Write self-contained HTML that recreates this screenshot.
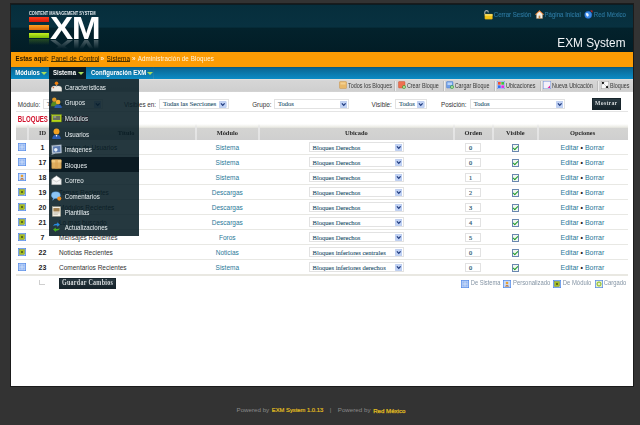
<!DOCTYPE html>
<html><head><meta charset="utf-8">
<style>
*{margin:0;padding:0;box-sizing:border-box}
html,body{width:640px;height:425px;overflow:hidden;background:#333;font-family:"Liberation Sans",sans-serif}
.a{position:absolute;white-space:nowrap}
#wrap{position:absolute;left:11px;top:4px;width:622px;height:382px;background:#fff;box-shadow:0 0 0 1px #1b1b1b}
.lnk{color:#2a7399;-webkit-text-stroke:0.15px #2a7399;font-size:6.1px;transform:scaleY(1.2);transform-origin:left center}
.crumb{font-size:6.4px;color:#241800;letter-spacing:0.05px;transform:scaleY(1.14);transform-origin:left center}
.mi{font-size:6px;font-weight:bold;color:#fff;transform:scaleY(1.22);transform-origin:left center}
.tri{position:absolute;width:0;height:0;border-left:3px solid transparent;border-right:3px solid transparent;border-top:3px solid #a6dc5c}
.tb{font-size:5.42px;color:#3a3a3a;transform:scaleY(1.18);transform-origin:left center}
.sep{position:absolute;width:1px;height:10px;background:#bdbdbd;box-shadow:1px 0 0 #ececec}
.ico{position:absolute;width:7.5px;height:8px;border-radius:1px}
.lbl{font-size:6.3px;color:#333}
.sel{position:absolute;height:10px;border:1px solid #e2e2e2;background:#fff;font-family:"Liberation Serif",serif;font-size:6.55px;color:#2a5670;-webkit-text-stroke:0.1px #2a5670;padding-left:3px;line-height:8px}
.sel svg{position:absolute;right:1px;top:1px}
.th{position:absolute;height:12.5px;background:linear-gradient(#dcdcd8,#d0d0d0 2px,#cdcdcd);font-family:"Liberation Serif",serif;font-weight:bold;font-size:6.4px;color:#2a2a2a;text-align:center;line-height:12.5px}
.c{position:absolute;font-size:6.5px;white-space:nowrap;line-height:15px}
.mod{color:#2a7898;text-align:center}
.id{font-weight:bold;color:#222;text-align:center;font-size:7px}
.tit{color:#333}
.ord{position:absolute;width:15.7px;height:9.6px;border:1px solid #e2e2e2;font-family:"Liberation Serif",serif;font-size:6.2px;color:#2a5670;-webkit-text-stroke:0.18px #2a5670;padding-left:3px;line-height:8px}
.chk{position:absolute;width:7.5px;height:7.5px;border:1px solid #6a88b0;background:#f0f6f0}
.chk:after{content:"";position:absolute;left:1.8px;top:0px;width:2px;height:4px;border-right:1.2px solid #1d9a2a;border-bottom:1.2px solid #1d9a2a;transform:rotate(45deg)}
.opt{color:#2a7898;font-size:6.95px}
.opt b{color:#222;font-weight:bold}
.ric{position:absolute;width:7.3px;height:7.3px;border:1px solid #7aa0e0;background:#dde8fb}
.ric.m:after{content:"";position:absolute;left:1.3px;top:1.3px;width:3px;height:3px;background:#a6b020;border:0.5px solid #556}
.ric.s:after{content:"";position:absolute;left:1px;top:1px;width:3.5px;height:3.5px;border:1px dotted #5a86c8}
.ric.p:after{content:"";position:absolute;left:1.5px;top:1.5px;width:3px;height:3px;background:#e8a040}
#dd{position:absolute;background:rgba(6,27,35,0.875)}
.di{position:absolute;left:0;width:90.2px;height:15.6px;color:#e8eef0}
.di span{position:absolute;left:15.5px;top:0;font-size:6.2px;line-height:16.5px;transform:scaleY(1.3);transform-origin:left 8.25px;white-space:nowrap}
.di i{position:absolute;left:3px;top:3.5px;width:9px;height:9px;border-radius:2px}
.btn{position:absolute;background:linear-gradient(#2a3a42,#15232a);border:1px solid #18252c;color:#d8dcde;font-family:"Liberation Serif",serif;text-align:center}
</style></head><body>
<div id="wrap">
<div class="a" style="left:0px;top:0px;width:622px;height:48px;background:linear-gradient(#0d1c22 0,#0d1c22 0.7px,#062e3c 0.8px,#083140 23px,#052a36 23.6px,#03222c 24.2px,#021d26 48px)"></div>
<div class="a a" style="left:17.7px;top:7.2px;font-size:4.6px;font-weight:bold;color:#dfe6ea;transform:scaleX(0.865);transform-origin:left">CONTENT MANAGEMENT SYSTEM</div>
<div class="a" style="left:18.2px;top:12.6px;width:19.7px;height:5.5px;background:linear-gradient(#ff3a1a,#d81a08)"></div>
<div class="a" style="left:18.2px;top:20.6px;width:19.7px;height:5.5px;background:linear-gradient(#ffa020,#e06a08)"></div>
<div class="a" style="left:18.2px;top:28.6px;width:19.7px;height:5.5px;background:linear-gradient(#c8f020,#78b808)"></div>
<div class="a" style="left:18.2px;top:35px;width:19.7px;height:6px;background:linear-gradient(rgba(120,180,20,0.3),rgba(120,180,20,0))"></div>
<div class="a" style="left:39.4px;top:8.7px;font-size:31px;font-weight:bold;color:#fff;letter-spacing:-1.2px;line-height:31px;transform:scaleX(1.12) ;transform-origin:left top;">XM</div>
<div class="a" style="left:39.4px;top:8.7px;font-size:31px;font-weight:bold;color:#fff;letter-spacing:-1.2px;line-height:31px;transform:scaleX(1.12) scaleY(-0.55);transform-origin:left 26.5px;opacity:0.3;-webkit-mask-image:linear-gradient(to top,rgba(0,0,0,1) 15%,rgba(0,0,0,0) 70%)">XM</div>
<div class="a" style="left:472.3px;top:6.2px;width:9.5px;height:9.5px;"><svg width="9.5" height="9.5" viewBox="0 0 16 16" style="position:absolute;left:0;top:0;"><path d="M3 7 V4 Q3 1 6 1 Q9 1 9 4" fill="none" stroke="#b0b0b0" stroke-width="1.8"/><rect x="3" y="7" width="13" height="8.5" rx="1" fill="#f2c418" stroke="#b88a10" stroke-width="0.6"/><rect x="3" y="7" width="13" height="2.5" fill="#fae070"/></svg></div>
<div class="a lnk" style="left:482.8px;top:6.7px;">Cerrar Sesión</div>
<div class="a" style="left:523.5px;top:6px;width:9px;height:9px;"><svg width="9" height="9" viewBox="0 0 16 16" style="position:absolute;left:0;top:0;"><path d="M8 1 L15.5 8 H13.5 V15 H2.5 V8 H0.5Z" fill="#f4f0e8" stroke="#b07030" stroke-width="0.6"/><path d="M8 0.5 L16 8 L14 8 L8 2.5 L2 8 L0 8Z" fill="#e07020"/><rect x="6.5" y="10" width="3" height="5" fill="#c08040"/></svg></div>
<div class="a lnk" style="left:533.5px;top:6.7px;">Página Inicial</div>
<div class="a" style="left:572.8px;top:6px;width:9px;height:9px;"><svg width="9" height="9" viewBox="0 0 16 16" style="position:absolute;left:0;top:0;"><circle cx="7.5" cy="8.5" r="6.5" fill="#3a8ae8" stroke="#1a5ab8" stroke-width="0.6"/><path d="M3 6 Q6 4 8 7 Q10 10 6 12 Q4 10 3 6Z" fill="#e8f4ff"/><path d="M11 1 L15 1 L15 5Z" fill="#e02020"/></svg></div>
<div class="a lnk" style="left:582.8px;top:6.7px;">Red México</div>
<div class="a a" style="left:546.3px;top:30.5px;font-size:11.8px;color:#f4f6f8;line-height:14px;transform:scaleY(1.15);transform-origin:left 7px">EXM System</div>
<div class="a" style="left:0px;top:48px;width:622px;height:14.6px;background:#fc9c04"></div>
<div class="a crumb" style="left:4.6px;top:50.6px;font-weight:bold;font-size:6.15px">Estas aquí:</div>
<div class="a crumb" style="left:40.2px;top:50.6px;">Panel de Control</div>
<div class="a" style="left:40.2px;top:57.2px;width:47.8px;height:0.8px;background:#4a3400"></div>
<div class="a crumb" style="left:89.5px;top:50.6px;color:#fff">»</div>
<div class="a crumb" style="left:95.6px;top:50.6px;">Sistema</div>
<div class="a" style="left:95.6px;top:57.2px;width:23.4px;height:0.8px;background:#4a3400"></div>
<div class="a crumb" style="left:121px;top:50.6px;color:#fff">»</div>
<div class="a crumb" style="left:126.7px;top:50.6px;color:#fff4e0;font-size:6.2px;letter-spacing:0.12px">Administración de Bloques</div>
<div class="a" style="left:0px;top:62.6px;width:622px;height:12.3px;background:linear-gradient(#0a5a80 0,#0a6a98 2px,#0b8cc6 12.3px)"></div>
<div class="a" style="left:38.2px;top:62.6px;width:36.8px;height:12.3px;background:#0b1a22"></div>
<div class="a" style="left:142.4px;top:62.6px;width:1px;height:12.3px;background:linear-gradient(#0f5f88,#2a90c0)"></div>
<div class="a mi" style="left:4.2px;top:65.8px;">Módulos</div>
<div class="tri" style="left:30px;top:67.8px"></div>
<div class="a mi" style="left:42px;top:65.8px;">Sistema</div>
<div class="tri" style="left:67.4px;top:67.8px"></div>
<div class="a mi" style="left:80px;top:65.8px;">Configuración EXM</div>
<div class="tri" style="left:136.3px;top:67.8px"></div>
<div class="a" style="left:0px;top:74.9px;width:622px;height:13.2px;background:linear-gradient(#e7e2dc 0,#d6d6d6 1.5px,#cfcfcf 12.4px,#ececec 13.2px)"></div>
<div class="a" style="left:328px;top:77px;width:8px;height:8px;"><svg width="8" height="8" viewBox="0 0 16 16" style="position:absolute;left:0;top:0;"><rect x="1" y="1" width="14" height="14" rx="1.5" fill="#e8b868" stroke="#c08840" stroke-width="0.8"/><rect x="3" y="3" width="10" height="4" fill="#f4d090"/></svg></div>
<div class="a tb" style="left:337px;top:78.7px;">Todos los Bloques</div>
<div class="sep" style="left:382.5px;top:76.5px;width:1px;height:10px;"></div>
<div class="a" style="left:386.5px;top:77px;width:8px;height:8px;"><svg width="8" height="8" viewBox="0 0 16 16" style="position:absolute;left:0;top:0;"><rect x="1" y="1" width="13" height="13" rx="1.5" fill="#ee7050" stroke="#c04828" stroke-width="0.8"/><circle cx="12" cy="12" r="3.6" fill="#38a828"/><path d="M12 10V14M10 12H14" stroke="#fff" stroke-width="1.2"/></svg></div>
<div class="a tb" style="left:395.9px;top:78.7px;">Crear Bloque</div>
<div class="sep" style="left:431.5px;top:76.5px;width:1px;height:10px;"></div>
<div class="a" style="left:434.7px;top:77px;width:8px;height:8px;"><svg width="8" height="8" viewBox="0 0 16 16" style="position:absolute;left:0;top:0;"><rect x="1" y="1" width="13" height="13" rx="1.5" fill="#70a0e8" stroke="#3a70c8" stroke-width="0.8"/><rect x="3" y="3" width="9" height="5" fill="#b8d4f8"/><circle cx="12" cy="12" r="3.6" fill="#38a828"/><path d="M12 10V14M10 12H14" stroke="#fff" stroke-width="1.2"/></svg></div>
<div class="a tb" style="left:443.7px;top:78.7px;">Cargar Bloque</div>
<div class="sep" style="left:482.7px;top:76.5px;width:1px;height:10px;"></div>
<div class="a" style="left:486px;top:77px;width:8px;height:8px;"><svg width="8" height="8" viewBox="0 0 16 16" style="position:absolute;left:0;top:0;"><rect x="0.5" y="0.5" width="15" height="15" fill="#eef" stroke="#6a8ee0"/><rect x="2" y="2" width="5.5" height="5.5" fill="#f05030"/><rect x="8.5" y="2" width="5.5" height="5.5" fill="#40c040"/><rect x="2" y="8.5" width="5.5" height="5.5" fill="#3070f0"/><rect x="8.5" y="8.5" width="5.5" height="5.5" fill="#e030e0"/></svg></div>
<div class="a tb" style="left:495px;top:78.7px;">Ubicaciones</div>
<div class="sep" style="left:528.7px;top:76.5px;width:1px;height:10px;"></div>
<div class="a" style="left:532.4px;top:77px;width:8px;height:8px;"><svg width="8" height="8" viewBox="0 0 16 16" style="position:absolute;left:0;top:0;"><rect x="0.5" y="0.5" width="15" height="15" fill="#fafafa" stroke="#7090e0"/><rect x="2" y="2" width="12" height="12" fill="#f4f0fa"/><path d="M9 14 L14 9 L14 14Z" fill="#e020a0"/></svg></div>
<div class="a tb" style="left:541px;top:78.7px;">Nueva Ubicación</div>
<div class="sep" style="left:586.3px;top:76.5px;width:1px;height:10px;"></div>
<div class="a" style="left:589.9px;top:77px;width:8px;height:8px;"><svg width="8" height="8" viewBox="0 0 16 16" style="position:absolute;left:0;top:0;"><rect x="0.5" y="0.5" width="15" height="15" fill="#fafafa" stroke="#a0a0a0"/><path d="M2.5 2.5 L6.5 6.5 M9.5 9.5 L13.5 13.5" stroke="#111" stroke-width="1.6"/><path d="M2 2 H7 L2 7Z M14 14 H9 L14 9Z" fill="#111"/></svg></div>
<div class="a tb" style="left:599px;top:78.7px;">Bloques</div>
<div class="a lbl" style="left:6.8px;top:96.6px;">Módulo:</div>
<div class="sel" style="left:32px;top:95px;width:60px;height:10.3px;">Todos<svg width="7.5" height="7" viewBox="0 0 15 14"><rect x="0.5" y="0.5" width="14" height="13" rx="1.5" fill="#c2d3f5" stroke="#a2b8e6"/><path d="M3.8 4.8 L7.5 8.8 L11.2 4.8" stroke="#203c80" stroke-width="2.6" fill="none"/></svg></div>
<div class="a lbl" style="left:113px;top:96.6px;">Visibles en:</div>
<div class="sel" style="left:148px;top:95.3px;width:69.8px;height:10.2px;font-size:6.9px;-webkit-text-stroke:0.08px #2a5670;letter-spacing:-0.1px">Todas las Secciones<svg width="7.5" height="7" viewBox="0 0 15 14"><rect x="0.5" y="0.5" width="14" height="13" rx="1.5" fill="#c2d3f5" stroke="#a2b8e6"/><path d="M3.8 4.8 L7.5 8.8 L11.2 4.8" stroke="#203c80" stroke-width="2.6" fill="none"/></svg></div>
<div class="a lbl" style="left:241.2px;top:96.6px;">Grupo:</div>
<div class="sel" style="left:263px;top:95px;width:75.3px;height:10.2px;">Todos<svg width="7.5" height="7" viewBox="0 0 15 14"><rect x="0.5" y="0.5" width="14" height="13" rx="1.5" fill="#c2d3f5" stroke="#a2b8e6"/><path d="M3.8 4.8 L7.5 8.8 L11.2 4.8" stroke="#203c80" stroke-width="2.6" fill="none"/></svg></div>
<div class="a lbl" style="left:360.6px;top:96.6px;">Visible:</div>
<div class="sel" style="left:384px;top:95px;width:31.6px;height:10.2px;">Todos<svg width="7.5" height="7" viewBox="0 0 15 14"><rect x="0.5" y="0.5" width="14" height="13" rx="1.5" fill="#c2d3f5" stroke="#a2b8e6"/><path d="M3.8 4.8 L7.5 8.8 L11.2 4.8" stroke="#203c80" stroke-width="2.6" fill="none"/></svg></div>
<div class="a lbl" style="left:430px;top:96.6px;">Posición:</div>
<div class="sel" style="left:458.7px;top:95px;width:95.6px;height:10.2px;">Todos<svg width="7.5" height="7" viewBox="0 0 15 14"><rect x="0.5" y="0.5" width="14" height="13" rx="1.5" fill="#c2d3f5" stroke="#a2b8e6"/><path d="M3.8 4.8 L7.5 8.8 L11.2 4.8" stroke="#203c80" stroke-width="2.6" fill="none"/></svg></div>
<div class="btn" style="left:580.9px;top:94.3px;width:28.7px;height:11.3px;font-size:5.7px;line-height:9.3px;font-weight:bold;letter-spacing:0.3px"><span style='display:inline-block;transform:scaleY(1.25)'>Mostrar</span></div>
<div class="a" style="left:5px;top:106.8px;width:611.6px;height:1px;background:#e4e4e4"></div>
<div class="a a" style="left:6.8px;top:110.9px;font-size:6.1px;font-weight:bold;color:#d2102a;transform:scaleY(1.35);transform-origin:left center">BLOQUES INSTALADOS</div>
<div class="a" style="left:5px;top:119.8px;width:611.6px;height:15.9px;background:linear-gradient(rgba(240,240,232,0) 0,#e9e9e2 3.4px,#d4d4d2 3.9px,#cfcfcf 15.9px)"></div>
<div class="th" style="left:5px;top:122.6px;width:12.3px;height:12.1px;background:none;line-height:12.1px"><span style='display:inline-block;transform:scaleY(1.1)'></span></div>
<div class="a" style="left:16.3px;top:119.8px;width:2.2px;height:15.9px;background:linear-gradient(rgba(236,236,236,0),#e6e6e6 3.5px,#e2e2e2)"></div>
<div class="th" style="left:17.3px;top:122.6px;width:28.4px;height:12.1px;background:none;line-height:12.1px"><span style='display:inline-block;transform:scaleY(1.1)'>ID</span></div>
<div class="a" style="left:44.7px;top:119.8px;width:2.2px;height:15.9px;background:linear-gradient(rgba(236,236,236,0),#e6e6e6 3.5px,#e2e2e2)"></div>
<div class="th" style="left:45.7px;top:122.6px;width:138.9px;height:12.1px;background:none;line-height:12.1px"><span style='display:inline-block;transform:scaleY(1.1)'>Título</span></div>
<div class="a" style="left:183.6px;top:119.8px;width:2.2px;height:15.9px;background:linear-gradient(rgba(236,236,236,0),#e6e6e6 3.5px,#e2e2e2)"></div>
<div class="th" style="left:184.6px;top:122.6px;width:63.4px;height:12.1px;background:none;line-height:12.1px"><span style='display:inline-block;transform:scaleY(1.1)'>Módulo</span></div>
<div class="a" style="left:247px;top:119.8px;width:2.2px;height:15.9px;background:linear-gradient(rgba(236,236,236,0),#e6e6e6 3.5px,#e2e2e2)"></div>
<div class="th" style="left:248px;top:122.6px;width:194.6px;height:12.1px;background:none;line-height:12.1px"><span style='display:inline-block;transform:scaleY(1.1)'>Ubicado</span></div>
<div class="a" style="left:441.6px;top:119.8px;width:2.2px;height:15.9px;background:linear-gradient(rgba(236,236,236,0),#e6e6e6 3.5px,#e2e2e2)"></div>
<div class="th" style="left:442.6px;top:122.6px;width:39.4px;height:12.1px;background:none;line-height:12.1px"><span style='display:inline-block;transform:scaleY(1.1)'>Orden</span></div>
<div class="a" style="left:481px;top:119.8px;width:2.2px;height:15.9px;background:linear-gradient(rgba(236,236,236,0),#e6e6e6 3.5px,#e2e2e2)"></div>
<div class="th" style="left:482px;top:122.6px;width:44.6px;height:12.1px;background:none;line-height:12.1px"><span style='display:inline-block;transform:scaleY(1.1)'>Visible</span></div>
<div class="a" style="left:525.6px;top:119.8px;width:2.2px;height:15.9px;background:linear-gradient(rgba(236,236,236,0),#e6e6e6 3.5px,#e2e2e2)"></div>
<div class="th" style="left:526.6px;top:122.6px;width:90.0px;height:12.1px;background:none;line-height:12.1px"><span style='display:inline-block;transform:scaleY(1.1)'>Opciones</span></div>
<div class="a" style="left:5px;top:150.0px;width:611.6px;height:1px;background:#e8e8e4"></div>
<div class="a" style="left:7.2px;top:139.1px;width:8px;height:8px;"><svg width="8" height="8" viewBox="0 0 16 16" style="position:absolute;left:0;top:0;"><rect x="0.7" y="0.7" width="14.6" height="14.6" fill="#c8dbfa" stroke="#4f86e6" stroke-width="1.4"/><rect x="3" y="3" width="10" height="10" fill="#7ea8f0"/><path d="M3 6.5H13M3 9.5H13M6.5 3V13M9.5 3V13" stroke="#e8f0fc" stroke-width="1"/></svg></div>
<div class="c id" style="left:17.3px;top:135.5px;width:28.4px">1</div>
<div class="c tit" style="left:48px;top:135.5px">Ingreso de Usuarios</div>
<div class="c mod" style="left:184.6px;top:135.5px;width:63.4px">Sistema</div>
<div class="sel" style="left:297.6px;top:137.9px;width:95.6px;height:10.6px;line-height:9.4px">Bloques Derechos<svg width="7.5" height="7" viewBox="0 0 15 14"><rect x="0.5" y="0.5" width="14" height="13" rx="1.5" fill="#c2d3f5" stroke="#a2b8e6"/><path d="M3.8 4.8 L7.5 8.8 L11.2 4.8" stroke="#203c80" stroke-width="2.6" fill="none"/></svg></div>
<div class="ord" style="left:453.9px;top:138.5px;width:15.7px;height:9.4px;">0</div>
<div class="chk" style="left:500.7px;top:140.1px;width:7.5px;height:7.5px;"></div>
<div class="c opt" style="left:549.5px;top:135.5px">Editar <b>•</b> Borrar</div>
<div class="a" style="left:5px;top:165.0px;width:611.6px;height:1px;background:#e8e8e4"></div>
<div class="a" style="left:7.2px;top:154.1px;width:8px;height:8px;"><svg width="8" height="8" viewBox="0 0 16 16" style="position:absolute;left:0;top:0;"><rect x="0.7" y="0.7" width="14.6" height="14.6" fill="#c8dbfa" stroke="#4f86e6" stroke-width="1.4"/><rect x="3" y="3" width="10" height="10" fill="#7ea8f0"/><path d="M3 6.5H13M3 9.5H13M6.5 3V13M9.5 3V13" stroke="#e8f0fc" stroke-width="1"/></svg></div>
<div class="c id" style="left:17.3px;top:150.5px;width:28.4px">17</div>
<div class="c tit" style="left:48px;top:150.5px"></div>
<div class="c mod" style="left:184.6px;top:150.5px;width:63.4px">Sistema</div>
<div class="sel" style="left:297.6px;top:152.9px;width:95.6px;height:10.6px;line-height:9.4px">Bloques Derechos<svg width="7.5" height="7" viewBox="0 0 15 14"><rect x="0.5" y="0.5" width="14" height="13" rx="1.5" fill="#c2d3f5" stroke="#a2b8e6"/><path d="M3.8 4.8 L7.5 8.8 L11.2 4.8" stroke="#203c80" stroke-width="2.6" fill="none"/></svg></div>
<div class="ord" style="left:453.9px;top:153.5px;width:15.7px;height:9.4px;">0</div>
<div class="chk" style="left:500.7px;top:155.1px;width:7.5px;height:7.5px;"></div>
<div class="c opt" style="left:549.5px;top:150.5px">Editar <b>•</b> Borrar</div>
<div class="a" style="left:5px;top:180.0px;width:611.6px;height:1px;background:#e8e8e4"></div>
<div class="a" style="left:7.2px;top:169.1px;width:8px;height:8px;"><svg width="8" height="8" viewBox="0 0 16 16" style="position:absolute;left:0;top:0;"><rect x="0.7" y="0.7" width="14.6" height="14.6" fill="#c8dbfa" stroke="#4f86e6" stroke-width="1.4"/><circle cx="8" cy="6" r="2.6" fill="#e8a030"/><path d="M3.5 13 Q8 6.5 12.5 13Z" fill="#b86a20"/></svg></div>
<div class="c id" style="left:17.3px;top:165.5px;width:28.4px">18</div>
<div class="c tit" style="left:48px;top:165.5px"></div>
<div class="c mod" style="left:184.6px;top:165.5px;width:63.4px">Sistema</div>
<div class="sel" style="left:297.6px;top:167.9px;width:95.6px;height:10.6px;line-height:9.4px">Bloques Derechos<svg width="7.5" height="7" viewBox="0 0 15 14"><rect x="0.5" y="0.5" width="14" height="13" rx="1.5" fill="#c2d3f5" stroke="#a2b8e6"/><path d="M3.8 4.8 L7.5 8.8 L11.2 4.8" stroke="#203c80" stroke-width="2.6" fill="none"/></svg></div>
<div class="ord" style="left:453.9px;top:168.5px;width:15.7px;height:9.4px;">1</div>
<div class="chk" style="left:500.7px;top:170.1px;width:7.5px;height:7.5px;"></div>
<div class="c opt" style="left:549.5px;top:165.5px">Editar <b>•</b> Borrar</div>
<div class="a" style="left:5px;top:195.0px;width:611.6px;height:1px;background:#e8e8e4"></div>
<div class="a" style="left:7.2px;top:184.1px;width:8px;height:8px;"><svg width="8" height="8" viewBox="0 0 16 16" style="position:absolute;left:0;top:0;"><rect x="0.7" y="0.7" width="14.6" height="14.6" fill="#c8dbfa" stroke="#4f86e6" stroke-width="1.4"/><rect x="3" y="3" width="10" height="10" fill="#a8c020" stroke="#6a8010" stroke-width="0.8"/><rect x="6" y="6" width="4" height="4" fill="#5a6a20"/></svg></div>
<div class="c id" style="left:17.3px;top:180.5px;width:28.4px">19</div>
<div class="c tit" style="left:48px;top:180.5px">Temas Recientes</div>
<div class="c mod" style="left:184.6px;top:180.5px;width:63.4px">Descargas</div>
<div class="sel" style="left:297.6px;top:182.9px;width:95.6px;height:10.6px;line-height:9.4px">Bloques Derechos<svg width="7.5" height="7" viewBox="0 0 15 14"><rect x="0.5" y="0.5" width="14" height="13" rx="1.5" fill="#c2d3f5" stroke="#a2b8e6"/><path d="M3.8 4.8 L7.5 8.8 L11.2 4.8" stroke="#203c80" stroke-width="2.6" fill="none"/></svg></div>
<div class="ord" style="left:453.9px;top:183.5px;width:15.7px;height:9.4px;">2</div>
<div class="chk" style="left:500.7px;top:185.1px;width:7.5px;height:7.5px;"></div>
<div class="c opt" style="left:549.5px;top:180.5px">Editar <b>•</b> Borrar</div>
<div class="a" style="left:5px;top:210.0px;width:611.6px;height:1px;background:#e8e8e4"></div>
<div class="a" style="left:7.2px;top:199.1px;width:8px;height:8px;"><svg width="8" height="8" viewBox="0 0 16 16" style="position:absolute;left:0;top:0;"><rect x="0.7" y="0.7" width="14.6" height="14.6" fill="#c8dbfa" stroke="#4f86e6" stroke-width="1.4"/><rect x="3" y="3" width="10" height="10" fill="#a8c020" stroke="#6a8010" stroke-width="0.8"/><rect x="6" y="6" width="4" height="4" fill="#5a6a20"/></svg></div>
<div class="c id" style="left:17.3px;top:195.5px;width:28.4px">20</div>
<div class="c tit" style="left:48px;top:195.5px">Módulos Recientes</div>
<div class="c mod" style="left:184.6px;top:195.5px;width:63.4px">Descargas</div>
<div class="sel" style="left:297.6px;top:197.9px;width:95.6px;height:10.6px;line-height:9.4px">Bloques Derechos<svg width="7.5" height="7" viewBox="0 0 15 14"><rect x="0.5" y="0.5" width="14" height="13" rx="1.5" fill="#c2d3f5" stroke="#a2b8e6"/><path d="M3.8 4.8 L7.5 8.8 L11.2 4.8" stroke="#203c80" stroke-width="2.6" fill="none"/></svg></div>
<div class="ord" style="left:453.9px;top:198.5px;width:15.7px;height:9.4px;">3</div>
<div class="chk" style="left:500.7px;top:200.1px;width:7.5px;height:7.5px;"></div>
<div class="c opt" style="left:549.5px;top:195.5px">Editar <b>•</b> Borrar</div>
<div class="a" style="left:5px;top:225.0px;width:611.6px;height:1px;background:#e8e8e4"></div>
<div class="a" style="left:7.2px;top:214.1px;width:8px;height:8px;"><svg width="8" height="8" viewBox="0 0 16 16" style="position:absolute;left:0;top:0;"><rect x="0.7" y="0.7" width="14.6" height="14.6" fill="#c8dbfa" stroke="#4f86e6" stroke-width="1.4"/><rect x="3" y="3" width="10" height="10" fill="#a8c020" stroke="#6a8010" stroke-width="0.8"/><rect x="6" y="6" width="4" height="4" fill="#5a6a20"/></svg></div>
<div class="c id" style="left:17.3px;top:210.5px;width:28.4px">21</div>
<div class="c tit" style="left:48px;top:210.5px">Lo mas buscado</div>
<div class="c mod" style="left:184.6px;top:210.5px;width:63.4px">Descargas</div>
<div class="sel" style="left:297.6px;top:212.9px;width:95.6px;height:10.6px;line-height:9.4px">Bloques Derechos<svg width="7.5" height="7" viewBox="0 0 15 14"><rect x="0.5" y="0.5" width="14" height="13" rx="1.5" fill="#c2d3f5" stroke="#a2b8e6"/><path d="M3.8 4.8 L7.5 8.8 L11.2 4.8" stroke="#203c80" stroke-width="2.6" fill="none"/></svg></div>
<div class="ord" style="left:453.9px;top:213.5px;width:15.7px;height:9.4px;">4</div>
<div class="chk" style="left:500.7px;top:215.1px;width:7.5px;height:7.5px;"></div>
<div class="c opt" style="left:549.5px;top:210.5px">Editar <b>•</b> Borrar</div>
<div class="a" style="left:5px;top:240.0px;width:611.6px;height:1px;background:#e8e8e4"></div>
<div class="a" style="left:7.2px;top:229.1px;width:8px;height:8px;"><svg width="8" height="8" viewBox="0 0 16 16" style="position:absolute;left:0;top:0;"><rect x="0.7" y="0.7" width="14.6" height="14.6" fill="#c8dbfa" stroke="#4f86e6" stroke-width="1.4"/><rect x="3" y="3" width="10" height="10" fill="#a8c020" stroke="#6a8010" stroke-width="0.8"/><rect x="6" y="6" width="4" height="4" fill="#5a6a20"/></svg></div>
<div class="c id" style="left:17.3px;top:225.5px;width:28.4px">7</div>
<div class="c tit" style="left:48px;top:225.5px">Mensajes Recientes</div>
<div class="c mod" style="left:184.6px;top:225.5px;width:63.4px">Foros</div>
<div class="sel" style="left:297.6px;top:227.9px;width:95.6px;height:10.6px;line-height:9.4px">Bloques Derechos<svg width="7.5" height="7" viewBox="0 0 15 14"><rect x="0.5" y="0.5" width="14" height="13" rx="1.5" fill="#c2d3f5" stroke="#a2b8e6"/><path d="M3.8 4.8 L7.5 8.8 L11.2 4.8" stroke="#203c80" stroke-width="2.6" fill="none"/></svg></div>
<div class="ord" style="left:453.9px;top:228.5px;width:15.7px;height:9.4px;">5</div>
<div class="chk" style="left:500.7px;top:230.1px;width:7.5px;height:7.5px;"></div>
<div class="c opt" style="left:549.5px;top:225.5px">Editar <b>•</b> Borrar</div>
<div class="a" style="left:5px;top:255.0px;width:611.6px;height:1px;background:#e8e8e4"></div>
<div class="a" style="left:7.2px;top:244.1px;width:8px;height:8px;"><svg width="8" height="8" viewBox="0 0 16 16" style="position:absolute;left:0;top:0;"><rect x="0.7" y="0.7" width="14.6" height="14.6" fill="#c8dbfa" stroke="#4f86e6" stroke-width="1.4"/><rect x="3" y="3" width="10" height="10" fill="#a8c020" stroke="#6a8010" stroke-width="0.8"/><rect x="6" y="6" width="4" height="4" fill="#5a6a20"/></svg></div>
<div class="c id" style="left:17.3px;top:240.5px;width:28.4px">22</div>
<div class="c tit" style="left:48px;top:240.5px">Noticias Recientes</div>
<div class="c mod" style="left:184.6px;top:240.5px;width:63.4px">Noticias</div>
<div class="sel" style="left:297.6px;top:242.9px;width:95.6px;height:10.6px;line-height:9.4px">Bloques inferiores centrales<svg width="7.5" height="7" viewBox="0 0 15 14"><rect x="0.5" y="0.5" width="14" height="13" rx="1.5" fill="#c2d3f5" stroke="#a2b8e6"/><path d="M3.8 4.8 L7.5 8.8 L11.2 4.8" stroke="#203c80" stroke-width="2.6" fill="none"/></svg></div>
<div class="ord" style="left:453.9px;top:243.5px;width:15.7px;height:9.4px;">0</div>
<div class="chk" style="left:500.7px;top:245.1px;width:7.5px;height:7.5px;"></div>
<div class="c opt" style="left:549.5px;top:240.5px">Editar <b>•</b> Borrar</div>
<div class="a" style="left:7.2px;top:259.1px;width:8px;height:8px;"><svg width="8" height="8" viewBox="0 0 16 16" style="position:absolute;left:0;top:0;"><rect x="0.7" y="0.7" width="14.6" height="14.6" fill="#c8dbfa" stroke="#4f86e6" stroke-width="1.4"/><rect x="3" y="3" width="10" height="10" fill="#7ea8f0"/><path d="M3 6.5H13M3 9.5H13M6.5 3V13M9.5 3V13" stroke="#e8f0fc" stroke-width="1"/></svg></div>
<div class="c id" style="left:17.3px;top:255.5px;width:28.4px">23</div>
<div class="c tit" style="left:48px;top:255.5px">Comentarios Recientes</div>
<div class="c mod" style="left:184.6px;top:255.5px;width:63.4px">Sistema</div>
<div class="sel" style="left:297.6px;top:257.9px;width:95.6px;height:10.6px;line-height:9.4px">Bloques inferiores derechos<svg width="7.5" height="7" viewBox="0 0 15 14"><rect x="0.5" y="0.5" width="14" height="13" rx="1.5" fill="#c2d3f5" stroke="#a2b8e6"/><path d="M3.8 4.8 L7.5 8.8 L11.2 4.8" stroke="#203c80" stroke-width="2.6" fill="none"/></svg></div>
<div class="ord" style="left:453.9px;top:258.5px;width:15.7px;height:9.4px;">0</div>
<div class="chk" style="left:500.7px;top:260.1px;width:7.5px;height:7.5px;"></div>
<div class="c opt" style="left:549.5px;top:255.5px">Editar <b>•</b> Borrar</div>
<div class="a" style="left:5px;top:270.3px;width:611.6px;height:1.6px;background:#e9e8e2"></div>
<div class="a" style="left:28.4px;top:275.8px;width:5.5px;height:4.8px;border-left:0.8px solid #cfcfcf;border-bottom:0.8px solid #cfcfcf"></div>
<div class="btn" style="left:48.1px;top:273.6px;width:57px;height:11.3px;font-size:6px;line-height:9.3px;font-weight:bold;letter-spacing:0.3px"><span style='display:inline-block;transform:scaleY(1.25)'>Guardar Cambios</span></div>
<div class="a" style="left:450.3px;top:275.8px;width:8px;height:8px;"><svg width="8" height="8" viewBox="0 0 16 16" style="position:absolute;left:0;top:0;"><rect x="0.7" y="0.7" width="14.6" height="14.6" fill="#c8dbfa" stroke="#4f86e6" stroke-width="1.4"/><rect x="3" y="3" width="10" height="10" fill="#7ea8f0"/><path d="M3 6.5H13M3 9.5H13M6.5 3V13M9.5 3V13" stroke="#e8f0fc" stroke-width="1"/></svg></div>
<div class="a a" style="left:459.8px;top:276.4px;font-size:5.75px;color:#8494a4;transform:scaleY(1.12);transform-origin:left center">De Sistema</div>
<div class="a" style="left:492.4px;top:275.8px;width:8px;height:8px;"><svg width="8" height="8" viewBox="0 0 16 16" style="position:absolute;left:0;top:0;"><rect x="0.7" y="0.7" width="14.6" height="14.6" fill="#c8dbfa" stroke="#4f86e6" stroke-width="1.4"/><circle cx="8" cy="6" r="2.6" fill="#e8a030"/><path d="M3.5 13 Q8 6.5 12.5 13Z" fill="#b86a20"/></svg></div>
<div class="a a" style="left:502px;top:276.4px;font-size:5.9px;color:#8494a4;transform:scaleY(1.12);transform-origin:left center">Personalizado</div>
<div class="a" style="left:542px;top:275.8px;width:8px;height:8px;"><svg width="8" height="8" viewBox="0 0 16 16" style="position:absolute;left:0;top:0;"><rect x="0.7" y="0.7" width="14.6" height="14.6" fill="#c8dbfa" stroke="#4f86e6" stroke-width="1.4"/><rect x="3" y="3" width="10" height="10" fill="#a8c020" stroke="#6a8010" stroke-width="0.8"/><rect x="6" y="6" width="4" height="4" fill="#5a6a20"/></svg></div>
<div class="a a" style="left:551.8px;top:276.4px;font-size:5.9px;color:#8494a4;transform:scaleY(1.12);transform-origin:left center">De Módulo</div>
<div class="a" style="left:583.6px;top:275.8px;width:8px;height:8px;"><svg width="8" height="8" viewBox="0 0 16 16" style="position:absolute;left:0;top:0;"><rect x="0.7" y="0.7" width="14.6" height="14.6" fill="#e4f0c8" stroke="#4f86e6" stroke-width="1.4"/><circle cx="8" cy="8" r="4" fill="none" stroke="#88b820" stroke-width="2"/></svg></div>
<div class="a a" style="left:592.8px;top:276.4px;font-size:5.9px;color:#8494a4;transform:scaleY(1.12);transform-origin:left center">Cargado</div>
<div id="dd" style="left:38.2px;top:74.9px;width:90.2px;height:156.8px;"><div class="di" style="top:0.0px;"><svg width="11" height="11" viewBox="0 0 16 16" style="position:absolute;left:0;top:0;left:2px;top:2.5px"><path d="M0.3 15 V11 Q0.5 7.5 4 7.3 H12 Q15.5 7.5 15.7 11 V15Z" fill="#ecebe6" stroke="#c0bcb0" stroke-width="0.5"/><rect x="7.2" y="4" width="1.6" height="4" fill="#9a9a9a"/><circle cx="8" cy="3.2" r="2.6" fill="#f08010"/><rect x="2.5" y="9" width="2" height="1.5" fill="#d05020"/></svg><span>Características</span></div><div class="di" style="top:15.6px;"><svg width="11" height="11" viewBox="0 0 16 16" style="position:absolute;left:0;top:0;left:2px;top:2.5px"><circle cx="4.8" cy="4" r="3.2" fill="#e09a28"/><path d="M0 13.5 Q0 6.8 4.8 7 Q9.5 6.8 9.5 13.5Z" fill="#5a8a20"/><circle cx="10.3" cy="7.4" r="3.4" fill="#f4b030"/><path d="M5 16 Q5 10.6 10.3 10.8 Q15.7 10.6 15.7 16Z" fill="#2c5cb0"/></svg><span>Grupos</span></div><div class="di" style="top:31.2px;"><svg width="11" height="11" viewBox="0 0 16 16" style="position:absolute;left:0;top:0;left:2px;top:2.5px"><rect x="1" y="2.5" width="14" height="10.5" fill="#b8d818" stroke="#8aa810" stroke-width="0.6"/><rect x="2.6" y="4" width="10.8" height="6.2" fill="#6a7060"/><rect x="3.5" y="5" width="4" height="1.6" fill="#b0b8a0"/></svg><span>Módulos</span></div><div class="di" style="top:46.8px;"><svg width="11" height="11" viewBox="0 0 16 16" style="position:absolute;left:0;top:0;left:2px;top:2.5px"><circle cx="8" cy="5.2" r="4.3" fill="#f4a020"/><path d="M1.8 16 Q1.8 9.6 8 9.8 Q14.2 9.6 14.2 16Z" fill="#2c5cb0"/><path d="M6.8 10 L8 13 L9.2 10Z" fill="#fff"/></svg><span>Usuarios</span></div><div class="di" style="top:62.4px;"><svg width="11" height="11" viewBox="0 0 16 16" style="position:absolute;left:0;top:0;left:2px;top:2.5px"><path d="M1 2 L15 1 L15.5 13 L1.5 14Z" fill="#c4d0dc" stroke="#7a8a9a" stroke-width="0.7"/><path d="M3 3.8 L13.5 3 L13.8 11.5 L3.3 12.2Z" fill="#5a7ab0"/><circle cx="7" cy="8.5" r="2.6" fill="#e8f0f8"/><path d="M0 16 L4 12 L6 14Z" fill="#a0b0c0"/></svg><span>Imágenes</span></div><div class="di" style="top:78.0px;background:#0b1a22"><svg width="11" height="11" viewBox="0 0 16 16" style="position:absolute;left:0;top:0;left:2px;top:2.5px"><rect x="1" y="1" width="14" height="13" rx="1" fill="#e0b060" stroke="#b08038" stroke-width="0.6"/><rect x="1" y="1" width="14" height="4" fill="#f0c880"/><rect x="6" y="1" width="4" height="13" fill="#d8a050" opacity="0.6"/></svg><span>Bloques</span></div><div class="di" style="top:93.6px;"><svg width="11" height="11" viewBox="0 0 16 16" style="position:absolute;left:0;top:0;left:2px;top:2.5px"><path d="M1 6 L8 1 L15 6 V14 H1Z" fill="#f4f4f4" stroke="#a0a0a0" stroke-width="0.6"/><path d="M1 6 L8 10 L15 6" fill="none" stroke="#b0b0b0" stroke-width="0.7"/><rect x="4" y="4" width="8" height="3" fill="#fff"/></svg><span>Correo</span></div><div class="di" style="top:109.2px;"><svg width="11" height="11" viewBox="0 0 16 16" style="position:absolute;left:0;top:0;left:2px;top:2.5px"><ellipse cx="7" cy="6" rx="6.5" ry="5" fill="#8cc4f4" stroke="#4a8ad0" stroke-width="0.6"/><path d="M3 10 L2 14 L6 10.5Z" fill="#6aa8e8"/><circle cx="12" cy="11" r="3" fill="#f09020"/></svg><span>Comentarios</span></div><div class="di" style="top:124.8px;"><svg width="11" height="11" viewBox="0 0 16 16" style="position:absolute;left:0;top:0;left:2px;top:2.5px"><rect x="2" y="1" width="12" height="14" fill="#f4efe4" stroke="#b0a890" stroke-width="0.6"/><rect x="3.5" y="3" width="9" height="5" fill="#a08050"/><path d="M3.5 10H12.5M3.5 12H10" stroke="#a09a8a" stroke-width="0.8"/></svg><span>Plantillas</span></div><div class="di" style="top:140.4px;"><svg width="11" height="11" viewBox="0 0 16 16" style="position:absolute;left:0;top:0;left:2px;top:2.5px"><path d="M3 6 Q4 2 9 2.5 L9 0.5 L13 4 L9 7 L9 5 Q5.5 4.5 3 6Z" fill="#2a8ae0"/><path d="M13 9 Q12 13 7 12.5 L7 14.5 L3 11 L7 8 L7 10 Q10.5 10.5 13 9Z" fill="#48b020"/></svg><span>Actualizaciones</span></div></div>
</div>
<div class="a" style="left:236.5px;top:406px;font-size:6.2px;color:#8a8a8a">Powered by</div><div class="a" style="left:271.8px;top:407px;font-size:5.82px;color:#e0be20;-webkit-text-stroke:0.2px #e0be20">EXM System 1.0.13</div><div class="a" style="left:329.8px;top:406px;font-size:6.2px;color:#8a8a8a">|</div><div class="a" style="left:337.8px;top:406px;font-size:6.2px;color:#8a8a8a">Powered by</div><div class="a" style="left:373.2px;top:406.8px;font-size:6.1px;color:#e0be20;-webkit-text-stroke:0.25px #e0be20">Red México</div>
</body></html>
